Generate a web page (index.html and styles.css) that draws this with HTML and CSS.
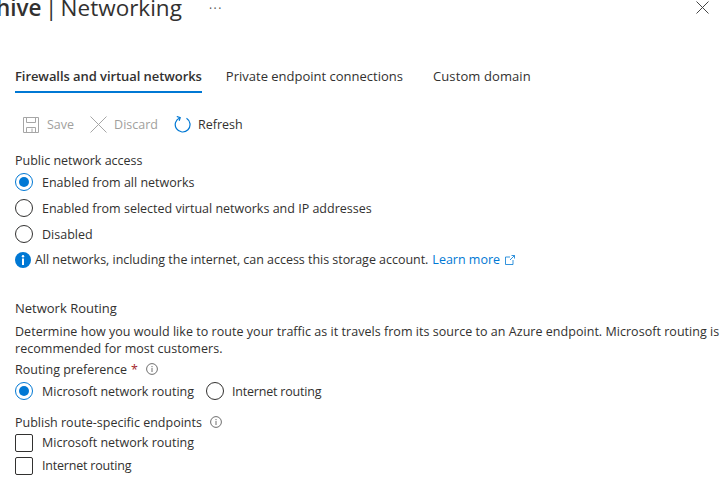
FILE: index.html
```html
<!DOCTYPE html>
<html lang="en">
<head>
    <meta charset="UTF-8">
    <meta name="viewport" content="width=device-width, initial-scale=1.0">
    <title>Networking</title>
    <link rel="stylesheet" href="styles.css">
</head>
<body>
    <header class="blade-header">
        <h1 class="blade-title"><b>hive</b> | Networking</h1>
        <span class="more">&middot;&middot;&middot;</span>
        <svg class="close" width="13" height="13" viewBox="0 0 13 13"><path d="M.5.5l12 12M12.5.5l-12 12" stroke="#444" fill="none"/></svg>
    </header>

    <nav class="tabs">
        <a class="tab active">Firewalls and virtual networks</a>
        <a class="tab">Private endpoint connections</a>
        <a class="tab">Custom domain</a>
    </nav>

    <div class="toolbar">
        <span class="cmd disabled">
            <svg width="16" height="17" viewBox="0 0 16 17" fill="none" stroke="#a6a6a6"><path d="M.5 1.500h15v15H.5z"/><path d="M3.500 1.500v5h9v-5M3.500 16.500v-5h9v5M9 12.500v4"/></svg>
            Save
        </span>
        <span class="cmd disabled">
            <svg width="17" height="17" viewBox="0 0 17 17" fill="none" stroke="#a6a6a6"><path d="M.5.5l16 16M16.500.5l-16 16"/></svg>
            Discard
        </span>
        <span class="cmd">
            <svg width="17" height="17" viewBox="0 0 17 17" fill="none" stroke="#0078d4" stroke-width="1.2"><path d="M6 1.700A7.400 7.400 0 1 0 12.500 2.300"/><path d="M2.800 .5L6.200 1.700 5.200 4.800"/></svg>
            Refresh
        </span>
    </div>

    <section class="field">
        <div class="label">Public network access</div>
        <label class="option"><span class="radio checked"></span>Enabled from all networks</label>
        <label class="option"><span class="radio"></span>Enabled from selected virtual networks and IP addresses</label>
        <label class="option"><span class="radio"></span>Disabled</label>
        <div class="notice">
            <svg width="16" height="16" viewBox="0 0 16 16"><circle cx="8" cy="8" r="8" fill="#0078d4"/><rect x="7" y="6.500" width="2" height="6.500" fill="#fff"/><circle cx="8" cy="4.300" r="1.200" fill="#fff"/></svg>
            <span class="notice-text">All networks, including the internet, can access this storage account.</span>
            <a class="link">Learn more
                <svg width="10" height="10" viewBox="0 0 10 10" fill="none" stroke="#0078d4" stroke-width=".8"><path d="M5 2H.5v7.500H8V5M5 5l4.500-4.500M6.500.500h3v3"/></svg>
            </a>
        </div>
    </section>

    <section class="routing">
        <h2 class="section-title">Network Routing</h2>
        <p class="desc">Determine how you would like to route your traffic as it travels from its source to an Azure endpoint. Microsoft routing is recommended for most customers.</p>
        <div class="label">Routing preference <span class="req">*</span>
            <svg class="tip" width="12" height="12" viewBox="0 0 12 12" fill="none" stroke="#6e6e6e"><circle cx="6" cy="6" r="5.400"/><path d="M6 5v4M6 3v1.200"/></svg>
        </div>
        <div class="inline-options">
            <label class="option"><span class="radio checked"></span>Microsoft network routing</label>
            <label class="option short"><span class="radio"></span>Internet routing</label>
        </div>
        <div class="label publish">Publish route-specific endpoints
            <svg class="tip" width="12" height="12" viewBox="0 0 12 12" fill="none" stroke="#6e6e6e"><circle cx="6" cy="6" r="5.400"/><path d="M6 5v4M6 3v1.200"/></svg>
        </div>
        <label class="check"><span class="box"></span>Microsoft network routing</label>
        <label class="check short"><span class="box"></span>Internet routing</label>
    </section>
</body>
</html>
```

FILE: styles.css
```css
html, body {
    height: 100%;
}

body {
    margin: 0;
    padding: 0 0 0 15px;
    overflow: hidden;
    background: #fff;
    color: #323130;
    font-family: "Open Sans", "Noto Sans", sans-serif;
    font-size: 12.5px;
}

.blade-header {
    display: flex;
    align-items: center;
    height: 20px;
    padding-right: 15px;
}

.blade-title {
    margin: -4px 0 0 -19px;
    font-size: 22.5px;
    font-weight: 400;
    line-height: 32px;
    word-spacing: -2.5px;
    white-space: nowrap;
}

.blade-title b {
    font-weight: 600;
}

.more {
    margin: -4px 0 0 27px;
    color: #555;
    font-size: 12px;
    letter-spacing: 1.5px;
}

.close {
    margin: -6px 0 0 auto;
}

.tabs {
    display: flex;
    gap: 24px;
    margin-top: 46px;
}

.tab {
    height: 27px;
    font-size: 13px;
    line-height: 21px;
    box-sizing: border-box;
}

.tab:last-child {
    margin-left: 6px;
    letter-spacing: .1px;
}

.tab.active {
    border-bottom: 2px solid #0078d4;
    font-weight: 600;
    letter-spacing: -.07px;
}

.toolbar {
    display: flex;
    gap: 16px;
    align-items: center;
    margin: 21px 0 0 8px;
    height: 20px;
}

.cmd {
    display: flex;
    align-items: center;
    gap: 8px;
}

.cmd + .cmd {
    gap: 7px;
}

.cmd.disabled {
    color: #a19f9d;
}

.field {
    margin-top: 17px;
}

.label {
    display: flex;
    align-items: center;
    height: 18px;
}

.option, .check {
    display: flex;
    align-items: center;
    gap: 9px;
    height: 26px;
}

.short {
    letter-spacing: -.2px;
}

.radio {
    width: 16px;
    height: 16px;
    border: 1px solid #323130;
    border-radius: 50%;
    position: relative;
}

.radio.checked {
    border-color: #0078d4;
}

.radio.checked::after {
    content: "";
    position: absolute;
    top: 3px;
    left: 3px;
    width: 10px;
    height: 10px;
    border-radius: 50%;
    background: #0078d4;
}

.notice {
    display: flex;
    align-items: center;
    gap: 4px;
    margin-top: 4px;
}

.notice-text {
    letter-spacing: -.03px;
}

.link {
    display: inline-flex;
    align-items: center;
    gap: 5px;
    color: #0078d4;
}

.routing {
    margin-top: 31px;
}

.section-title {
    margin: 0;
    font-size: 13px;
    font-weight: 400;
    line-height: 18px;
}

.desc {
    margin: 6px 0 3px;
    line-height: 17px;
    letter-spacing: .035px;
}

.req {
    margin-left: 4px;
    color: #a4262c;
}

.tip {
    margin-left: 8px;
}

.inline-options {
    display: flex;
    gap: 12px;
}

.inline-options .short {
    gap: 8px;
}

.publish {
    margin-top: 9px;
}

.check {
    height: 23px;
}

.box {
    width: 16px;
    height: 16px;
    border: 1px solid #323130;
    border-radius: 2px;
}
```
